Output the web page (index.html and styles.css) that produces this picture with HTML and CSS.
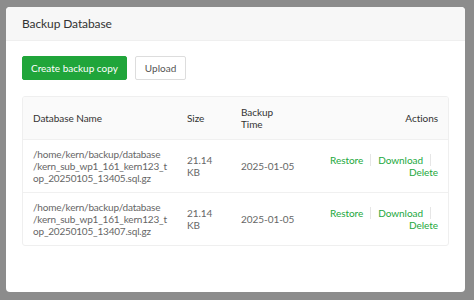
FILE: index.html
```html
<!DOCTYPE html>
<html lang="en">
<head>
    <meta charset="UTF-8">
    <meta name="viewport" content="width=device-width, initial-scale=1.0">
    <title>Backup Database</title>
    <link rel="stylesheet" href="styles.css">
</head>
<body>

    <div class="modal">
        <div class="modal-header">Backup Database</div>

        <div class="modal-body">
            <div class="toolbar">
                <button class="btn btn-primary">Create backup copy</button>
                <button class="btn btn-default">Upload</button>
            </div>

            <div class="table-wrap">
                <table class="backup-table">
                    <thead>
                        <tr>
                            <th class="col-name">Database Name</th>
                            <th class="col-size">Size</th>
                            <th class="col-time">Backup Time</th>
                            <th class="col-actions">Actions</th>
                        </tr>
                    </thead>
                    <tbody>
                        <tr>
                            <td class="path">/home/kern/backup/database /kern_sub_wp1_161_kern123_top_20250105_13405.sql.gz</td>
                            <td>21.14 KB</td>
                            <td class="date">2025-01-05</td>
                            <td class="col-actions"><a href="#">Restore</a><span class="sep"></span><a href="#">Download</a><span class="sep"></span><a href="#">Delete</a></td>
                        </tr>
                        <tr>
                            <td class="path">/home/kern/backup/database /kern_sub_wp1_161_kern123_top_20250105_13407.sql.gz</td>
                            <td>21.14 KB</td>
                            <td class="date">2025-01-05</td>
                            <td class="col-actions"><a href="#">Restore</a><span class="sep"></span><a href="#">Download</a><span class="sep"></span><a href="#">Delete</a></td>
                        </tr>
                    </tbody>
                </table>
            </div>
        </div>
    </div>

</body>
</html>
```

FILE: styles.css
```css
body {
    font-family: Lato, 'Noto Sans', sans-serif;
    background-color: #8c8c8c;
    margin: 0;
    padding: 7px 9px 8px 6px;
    color: #333;
}

.modal {
    height: 285px;
    background-color: #fff;
    border-radius: 4px;
    overflow: hidden;
}

.modal-header {
    height: 34px;
    line-height: 33px;
    padding-left: 16px;
    font-size: 12px;
    letter-spacing: -0.1px;
    color: #333;
    background-color: #f7f7f7;
    border-bottom: 1px solid #efefef;
    box-sizing: border-box;
}

.modal-body {
    padding: 15px 16px;
}

.toolbar {
    display: flex;
    gap: 8px;
    margin-bottom: 16px;
}

.btn {
    height: 24px;
    padding: 0 8px;
    font-family: inherit;
    font-size: 10px;
    border-radius: 2px;
    cursor: pointer;
}

.btn-primary {
    background-color: #20a53a;
    border: 1px solid #20a53a;
    color: #fff;
}

.btn-default {
    padding: 0 9px;
    background-color: #fff;
    border: 1px solid #ddd;
    color: #555;
}

.table-wrap {
    width: 427px;
    border: 1px solid #efefef;
    border-radius: 3px;
    box-sizing: border-box;
    overflow: hidden;
}

.backup-table {
    width: 100%;
    border-collapse: collapse;
    table-layout: fixed;
    font-size: 10px;
    letter-spacing: -0.05px;
    line-height: 12px;
}

.backup-table th {
    font-weight: normal;
    color: #333;
    text-align: left;
    background-color: #fafafa;
    padding: 9px 10px;
}

.backup-table td {
    color: #666;
    padding: 8px 10px;
    border-top: 1px solid #f0f0f0;
    height: 36px;
}

.backup-table .path {
    overflow-wrap: anywhere;
    letter-spacing: -0.2px;
}

.col-name {
    width: 134px;
}

.col-size {
    width: 34px;
}

.col-time {
    width: 45px;
}

.backup-table .date {
    white-space: nowrap;
}

.backup-table .col-actions {
    text-align: right;
}

.col-actions a {
    color: #22a83c;
    text-decoration: none;
}

.sep {
    display: inline-block;
    width: 1px;
    height: 12px;
    margin: 0 7px -2px;
    background-color: #e6e6e6;
}
```
